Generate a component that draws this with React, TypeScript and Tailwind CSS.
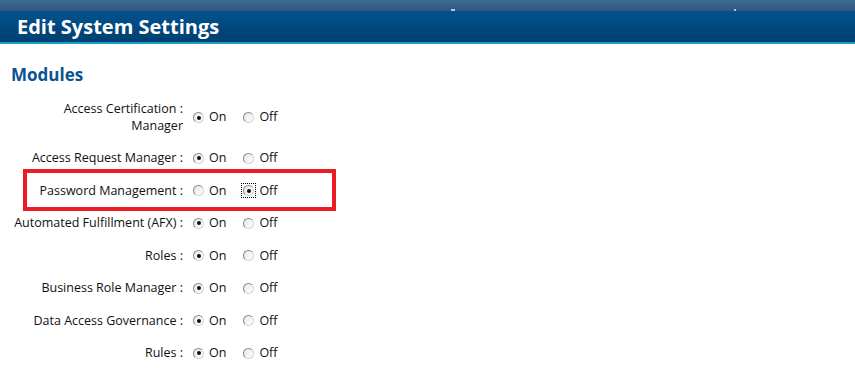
import React from "react"

type Mod = { label: React.ReactNode; key: string; on: boolean; focus?: boolean; boxed?: boolean }

const modules: Mod[] = [
  { key: "acm", label: <>Access Certification :<br />Manager</>, on: true },
  { key: "arm", label: "Access Request Manager :", on: true },
  { key: "pm", label: "Password Management :", on: false, focus: true, boxed: true },
  { key: "afx", label: "Automated Fulfillment (AFX) :", on: true },
  { key: "roles", label: "Roles :", on: true },
  { key: "brm", label: "Business Role Manager :", on: true },
  { key: "dag", label: "Data Access Governance :", on: true },
  { key: "rules", label: "Rules :", on: true },
]

function Radio({ checked, focus }: { checked: boolean; focus?: boolean }) {
  const dot = (
    <span className="flex h-[11px] w-[11px] items-center justify-center rounded-full border border-t-[#8a8a8a] border-l-[#8a8a8a] border-r-[#d4d4d4] border-b-[#d4d4d4] bg-gradient-to-br from-[#e8e8e8] to-white">
      {checked && <span className="h-[4px] w-[4px] rounded-full bg-[#111]" />}
    </span>
  )
  if (focus) {
    return <span className="flex h-[15px] w-[15px] items-center justify-center border border-dotted border-black">{dot}</span>
  }
  return <span className="flex h-[15px] w-[15px] items-center justify-center">{dot}</span>
}

function Row({ m }: { m: Mod }) {
  return (
    <div className="relative flex items-center py-2">
      {m.boxed && <div className="pointer-events-none absolute left-[12px] top-[-6px] h-[42px] w-[313px] border-4 border-[#ec1c24]" />}
      <div className="w-[172px] text-right">{m.label}</div>
      <div className="ml-[8px] flex items-center gap-[3px]">
        <Radio checked={m.on} />
        <span>On</span>
      </div>
      <div className="ml-[15px] flex items-center gap-[3px]">
        <Radio checked={!m.on} focus={m.focus} />
        <span>Off</span>
      </div>
    </div>
  )
}

export default function App() {
  return (
    <div className="h-[368px] w-[855px] overflow-hidden bg-white font-['Open_Sans',sans-serif]">
      <div className="relative h-[11px] bg-gradient-to-b from-[#3e6c95] to-[#2f577c]">
        <span className="absolute left-[451px] top-[9px] h-[2px] w-[4px] bg-[#b8c4d0]" />
        <span className="absolute left-[734px] top-[9px] h-[2px] w-[2px] bg-[#b8c4d0]" />
      </div>
      <div className="flex h-[33px] items-center border-b-2 border-[#1c9cc6] bg-gradient-to-b from-[#03538f] to-[#003f70] pl-[17px]">
        <h1 className="text-[20px] font-bold text-white">Edit System Settings</h1>
      </div>
      <div className="pl-[11px] pt-[19px] text-[12.5px] leading-[16.5px] text-[#111]">
        <h2 className="mb-[6px] text-[17px] leading-[24px] font-bold text-[#0b5390]">Modules</h2>
        {modules.map((m) => (
          <Row key={m.key} m={m} />
        ))}
      </div>
    </div>
  )
}
